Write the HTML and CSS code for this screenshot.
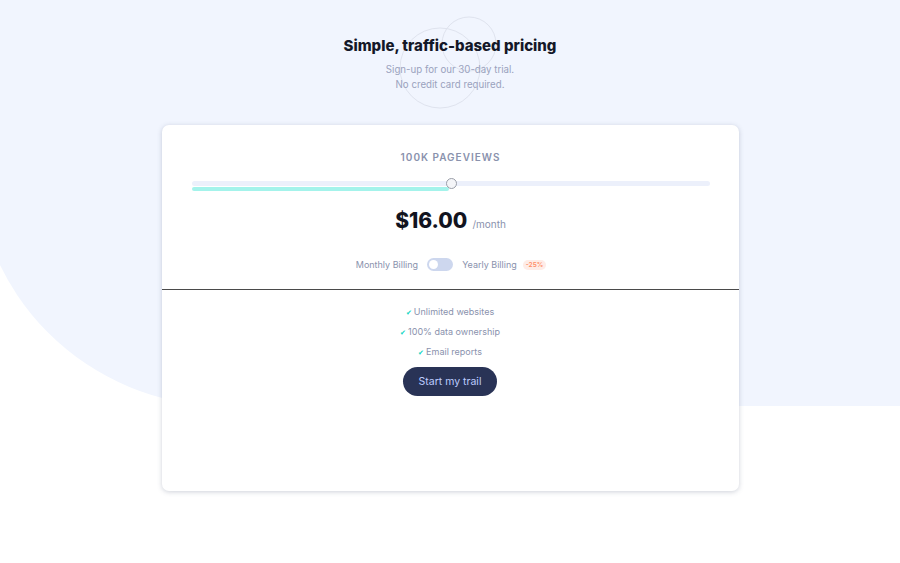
FILE: index.html
```html
<!DOCTYPE html>
<html lang="en">
<head>
<meta charset="utf-8">
<title>Interactive pricing component</title>
<link rel="stylesheet" href="styles.css">
</head>
<body>
<div class="page">
  <header class="header">
    <svg class="circles" width="120" height="110" viewBox="0 0 120 110" aria-hidden="true">
      <circle cx="69" cy="44" r="27" fill="none" stroke="#dfe3ee" stroke-width="1"/>
      <circle cx="40" cy="68" r="40" fill="none" stroke="#dfe3ee" stroke-width="1"/>
    </svg>
    <h1 class="title">Simple, traffic-based pricing</h1>
    <p class="subtitle">Sign-up for our 30-day trial.<br>No credit card required.</p>
  </header>
  <main class="card">
    <section class="top">
      <div class="views">100K PAGEVIEWS</div>
      <div class="slider">
        <div class="track"><span class="thumb"></span></div>
        <div class="fill" style="width: 49.8%"></div>
      </div>
      <div class="price"><span class="amount">$16.00</span><span class="per">/month</span></div>
      <div class="billing">
        <span class="label">Monthly Billing</span>
        <span class="toggle"><span class="knob"></span></span>
        <span class="label">Yearly Billing</span>
        <span class="badge">-25%</span>
      </div>
    </section>
    <section class="bottom">
      <ul class="features">
        <li><span class="check">✔</span>Unlimited websites</li>
        <li><span class="check">✔</span>100% data ownership</li>
        <li><span class="check">✔</span>Email reports</li>
      </ul>
      <button class="cta">Start my trail</button>
    </section>
  </main>
</div>
</body>
</html>
```
FILE: styles.css
```css
* { box-sizing: border-box; }
html, body { margin: 0; padding: 0; }
body {
  background: #ffffff;
  font-family: Inter, "Noto Sans", "Liberation Sans", sans-serif;
  width: 900px;
  height: 563px;
  overflow: hidden;
}
.page {
  position: relative;
  width: 900px;
  height: 563px;
  padding-top: 37px;
}
.page::before {
  content: "";
  position: absolute;
  top: 0;
  left: -25px;
  width: 925px;
  height: 406px;
  background: #f1f5fe;
  border-bottom-left-radius: 250px;
  z-index: -1;
}
.header {
  position: relative;
  text-align: center;
}
.circles {
  position: absolute;
  top: -37px;
  left: 400px;
  z-index: 0;
}
.title {
  position: relative;
  margin: 0;
  font-size: 15px;
  line-height: 18px;
  font-weight: 800;
  color: #141828;
}
.subtitle {
  position: relative;
  margin: 7px 0 0;
  font-size: 9.7px;
  line-height: 15px;
  color: #9aa2bd;
}
.card {
  width: 577px;
  height: 366px;
  margin: 33px auto 0;
  background: #ffffff;
  border-radius: 7px;
  box-shadow: 0 1px 5px rgba(80, 90, 120, 0.28);
  overflow: hidden;
}
.top {
  padding: 26px 29px 0 30px;
  height: 165px;
  border-bottom: 1px solid #4a4a4a;
  text-align: center;
}
.views {
  font-size: 10px;
  line-height: 13px;
  font-weight: 600;
  letter-spacing: 1px;
  color: #8a92ad;
}
.slider {
  margin-top: 17px;
}
.track {
  position: relative;
  height: 5px;
  border-radius: 3px;
  background: #ecf0fb;
}
.thumb {
  position: absolute;
  left: 254px;
  top: -3px;
  width: 11px;
  height: 11px;
  border-radius: 50%;
  background: #f4f5f8;
  border: 1px solid #9a9ea8;
}
.fill {
  height: 4px;
  margin-top: 1px;
  border-radius: 2px;
  background: #a4f3eb;
}
.price {
  margin-top: 17px;
  display: flex;
  justify-content: center;
  align-items: baseline;
  gap: 5px;
  padding-left: 0;
}
.amount {
  font-size: 21px;
  line-height: 26px;
  font-weight: 800;
  color: #12141f;
}
.per {
  font-size: 10px;
  color: #8a92ad;
}
.billing {
  margin-top: 24px;
  display: flex;
  justify-content: center;
  align-items: center;
  gap: 9px;
  padding-left: 1px;
}
.label {
  font-size: 9px;
  color: #8a92ad;
}
.toggle {
  display: inline-flex;
  align-items: center;
  width: 26px;
  height: 13px;
  border-radius: 7px;
  background: #cdd7ee;
  padding: 0 2px;
}
.knob {
  width: 9px;
  height: 9px;
  border-radius: 50%;
  background: #ffffff;
}
.badge {
  margin-left: -3px;
  font-size: 6.5px;
  line-height: 10px;
  padding: 0 3px;
  border-radius: 6px;
  background: #feece7;
  color: #ff8c66;
  font-weight: 600;
}
.bottom {
  padding-top: 15px;
  text-align: center;
}
.features {
  list-style: none;
  margin: 0;
  padding: 0;
  display: flex;
  flex-direction: column;
  gap: 6px;
  align-items: center;
}
.features li {
  font-size: 9px;
  line-height: 13px;
  height: 14px;
  color: #8a92ad;
}
.check {
  font-size: 7px;
  color: #10d5c2;
  margin-right: 2px;
}
.cta {
  margin-top: 8px;
  width: 94px;
  height: 29px;
  border: 0;
  border-radius: 15px;
  background: #293356;
  color: #bdccff;
  font-family: Inter, "Noto Sans", "Liberation Sans", sans-serif;
  font-size: 10.5px;
  cursor: pointer;
}
```
